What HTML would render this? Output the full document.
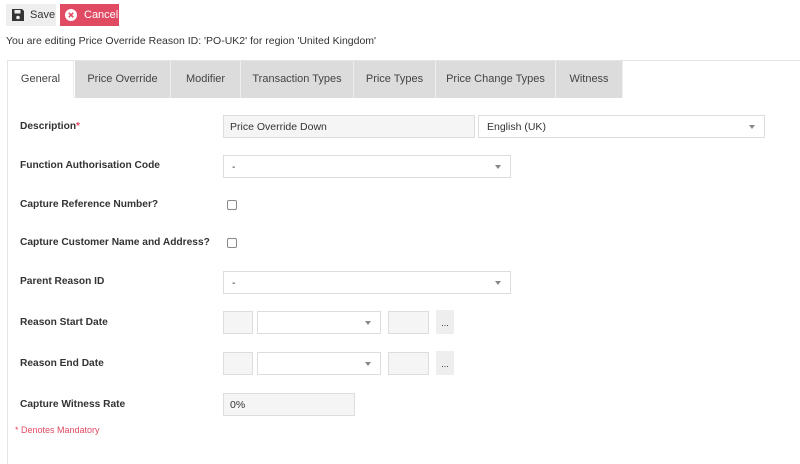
<!DOCTYPE html>
<html><head><style>
*{box-sizing:border-box;margin:0;padding:0}
body{width:800px;height:464px;background:#fff;font-family:"Liberation Sans",sans-serif;font-size:11px;color:#333;position:relative;overflow:hidden}
.a{position:absolute}
.btn{top:4px;height:22px;line-height:22px;font-size:11px;padding-left:24px}
.tab{top:61px;height:37px;line-height:37px;text-align:center;background:#dcdcdc;color:#444;font-size:11px;border-right:1px solid #eee}
.lbl{left:20px;font-weight:bold;font-size:10.2px;color:#333}
.inp{height:23px;border:1px solid #ddd;background:#f5f5f5;line-height:23px;padding-left:6px;font-size:10.5px}
.sel{height:23px;border:1px solid #ddd;background:#fff;line-height:23px;padding-left:8px;font-size:10.5px}
.sel:after{content:"";position:absolute;right:9px;top:9px;border-left:3px solid transparent;border-right:3px solid transparent;border-top:4px solid #888}
.cb{width:10px;height:10px;border:1px solid #888;border-radius:2px;left:227px}
.dots{width:18px;height:24px;background:#eee;text-align:center;line-height:26px;font-size:9px}
</style></head><body>
<div class="a btn" style="left:6px;width:50px;background:#eee;color:#333">
<svg class="a" style="left:6px;top:5px" width="12" height="12" viewBox="0 0 12 12"><path d="M0 0H10L12 2V12H0Z" fill="#333"/><rect x="2.5" y="1" width="6" height="3.5" fill="#eee"/><circle cx="6" cy="8.5" r="1.8" fill="#eee"/></svg>Save</div>
<div class="a btn" style="left:60px;width:59px;background:#e04a63;color:#fff">
<svg class="a" style="left:5px;top:5px" width="12" height="12" viewBox="0 0 12 12"><circle cx="6" cy="6" r="6" fill="#fff"/><path d="M3.8 3.8L8.2 8.2M8.2 3.8L3.8 8.2" stroke="#e04a63" stroke-width="1.6"/></svg>Cancel</div>
<div class="a" style="left:6px;top:35px;font-size:10.5px">You are editing Price Override Reason ID: 'PO-UK2' for region 'United Kingdom'</div>
<div class="a" style="left:7px;top:60px;width:793px;height:1px;background:#e5e5e5"></div>
<div class="a" style="left:7px;top:60px;width:1px;height:404px;background:#e5e5e5"></div>
<div class="a tab" style="left:8px;width:66px;background:#fff">General</div>
<div class="a tab" style="left:75px;width:96px">Price Override</div>
<div class="a tab" style="left:171px;width:70px">Modifier</div>
<div class="a tab" style="left:241px;width:113px">Transaction Types</div>
<div class="a tab" style="left:354px;width:82px">Price Types</div>
<div class="a tab" style="left:436px;width:120px">Price Change Types</div>
<div class="a tab" style="left:556px;width:67px">Witness</div>

<div class="a lbl" style="top:121px">Description<span style="color:#e04a63">*</span></div>
<div class="a inp" style="left:223px;top:115px;width:252px">Price Override Down</div>
<div class="a sel" style="left:478px;top:115px;width:287px">English (UK)</div>

<div class="a lbl" style="top:160px">Function Authorisation Code</div>
<div class="a sel" style="left:223px;top:155px;width:288px">-</div>

<div class="a lbl" style="top:199px">Capture Reference Number?</div>
<div class="a cb" style="top:200px"></div>
<div class="a lbl" style="top:237px">Capture Customer Name and Address?</div>
<div class="a cb" style="top:238px"></div>

<div class="a lbl" style="top:276px">Parent Reason ID</div>
<div class="a sel" style="left:223px;top:271px;width:288px">-</div>

<div class="a lbl" style="top:317px">Reason Start Date</div>
<div class="a inp" style="left:223px;top:311px;width:30px"></div>
<div class="a sel" style="left:257px;top:311px;width:124px"></div>
<div class="a inp" style="left:388px;top:311px;width:41px"></div>
<div class="a dots" style="left:436px;top:310px">...</div>

<div class="a lbl" style="top:358px">Reason End Date</div>
<div class="a inp" style="left:223px;top:352px;width:30px"></div>
<div class="a sel" style="left:257px;top:352px;width:124px"></div>
<div class="a inp" style="left:388px;top:352px;width:41px"></div>
<div class="a dots" style="left:436px;top:351px">...</div>

<div class="a lbl" style="top:399px">Capture Witness Rate</div>
<div class="a inp" style="left:223px;top:393px;width:132px">0%</div>
<div class="a" style="left:15px;top:425px;font-size:9px;color:#e04a63">* Denotes Mandatory</div>
</body></html>
